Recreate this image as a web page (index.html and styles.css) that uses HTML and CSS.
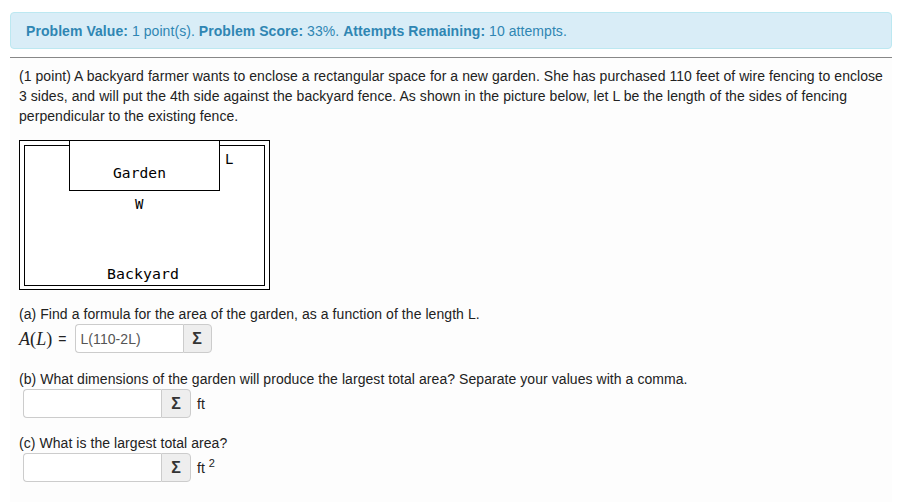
FILE: index.html
```html
<!DOCTYPE html>
<html>
<head>
<meta charset="utf-8">
<link rel="stylesheet" href="styles.css">
</head>
<body>
<div class="alert">
  <b>Problem Value:</b> 1 point(s). <b>Problem Score:</b> 33%. <b>Attempts Remaining:</b> 10 attempts.
</div>
<div class="problem">
  <p class="intro">(1 point) A backyard farmer wants to enclose a rectangular space for a new garden. She has purchased 110 feet of wire fencing to enclose 3 sides, and will put the 4th side against the backyard fence. As shown in the picture below, let L be the length of the sides of fencing perpendicular to the existing fence.</p>
  <svg class="diagram" width="251" height="150" viewBox="0 0 251 150" shape-rendering="crispEdges">
    <rect x="0.5" y="0.5" width="250" height="149" fill="none" stroke="#000"/>
    <rect x="5.5" y="5.5" width="240" height="140" fill="none" stroke="#000"/>
    <rect x="50.5" y="0.5" width="150" height="50" fill="#fff" stroke="#000"/>
    <text x="94" y="38" textLength="53" lengthAdjust="spacingAndGlyphs">Garden</text>
    <text x="206" y="24">L</text>
    <text x="116" y="69">W</text>
    <text x="88" y="139" textLength="72" lengthAdjust="spacingAndGlyphs">Backyard</text>
  </svg>
  <p class="q">(a) Find a formula for the area of the garden, as a function of the length L.</p>
  <div class="row">
    <span class="math"><i>A</i>(<i>L</i>)</span><span class="eq">=</span>
    <span class="group group-a"><span class="inp">L(110-2L)</span><span class="btn">Σ</span></span>
  </div>
  <p class="q qb">(b) What dimensions of the garden will produce the largest total area? Separate your values with a comma.</p>
  <div class="row">
    <span class="group group-b"><span class="inp"></span><span class="btn">Σ</span></span><span class="unit">ft</span>
  </div>
  <p class="q qc">(c) What is the largest total area?</p>
  <div class="row">
    <span class="group group-b"><span class="inp"></span><span class="btn">Σ</span></span><span class="unit">ft <sup>2</sup></span>
  </div>
</div>
</body>
</html>
```

FILE: styles.css
```css
html, body {
  margin: 0;
  padding: 0;
  background: #fff;
}
body {
  font-family: "Liberation Sans", Arial, Helvetica, sans-serif;
  font-size: 14px;
  line-height: 20px;
  letter-spacing: 0.06px;
  color: #222;
}
.alert {
  margin: 12px 11px 0 10px;
  padding: 8px 15px;
  background: #d9edf7;
  border: 1px solid #bce8f1;
  border-radius: 4px;
  color: #2f86b3;
  height: 19px;
  line-height: 20px;
}
.alert b {
  font-weight: bold;
}
.problem {
  margin: 8px 11px 0 10px;
  border-top: 1px solid #888;
  padding: 8px 9px 20px 9px;
  background: #fdfdfd;
}
.intro {
  margin: 0;
}
.diagram {
  display: block;
  margin-top: 14px;
  background: #fff;
}
.diagram text {
  font-family: "DejaVu Sans Mono", monospace;
  font-size: 14px;
  fill: #000;
}
.q {
  margin: 14px 0 0 0;
}
.qb {
  margin-top: 16px;
}
.qc {
  margin-top: 15px;
}
.row {
  display: flex;
  align-items: center;
  height: 29px;
}
.math {
  font-family: "Liberation Serif", "Times New Roman", serif;
  font-size: 18px;
  font-weight: normal;
}
.eq {
  margin: 0 8px 0 6px;
  font-size: 14px;
}
.group {
  display: flex;
  height: 29px;
  box-sizing: border-box;
}
.inp {
  box-sizing: border-box;
  height: 29px;
  border: 1px solid #ccc;
  border-right: none;
  border-radius: 4px 0 0 4px;
  background: #fff;
  color: #555;
  padding: 4px 5px;
  line-height: 20px;
}
.group-a .inp {
  width: 108px;
}
.group-b {
  margin-left: 4px;
}
.group-b .inp {
  width: 138px;
}
.btn {
  box-sizing: border-box;
  width: 30px;
  height: 29px;
  border: 1px solid #ccc;
  border-radius: 0 4px 4px 0;
  background: #eee;
  color: #333;
  font-weight: bold;
  font-size: 16px;
  display: flex;
  align-items: center;
  justify-content: center;
}
.group-a .btn {
  width: 29px;
}
.unit {
  margin-left: 6px;
  color: #222;
}
.unit sup {
  font-size: 11px;
  line-height: 0;
  vertical-align: 6px;
}
```
